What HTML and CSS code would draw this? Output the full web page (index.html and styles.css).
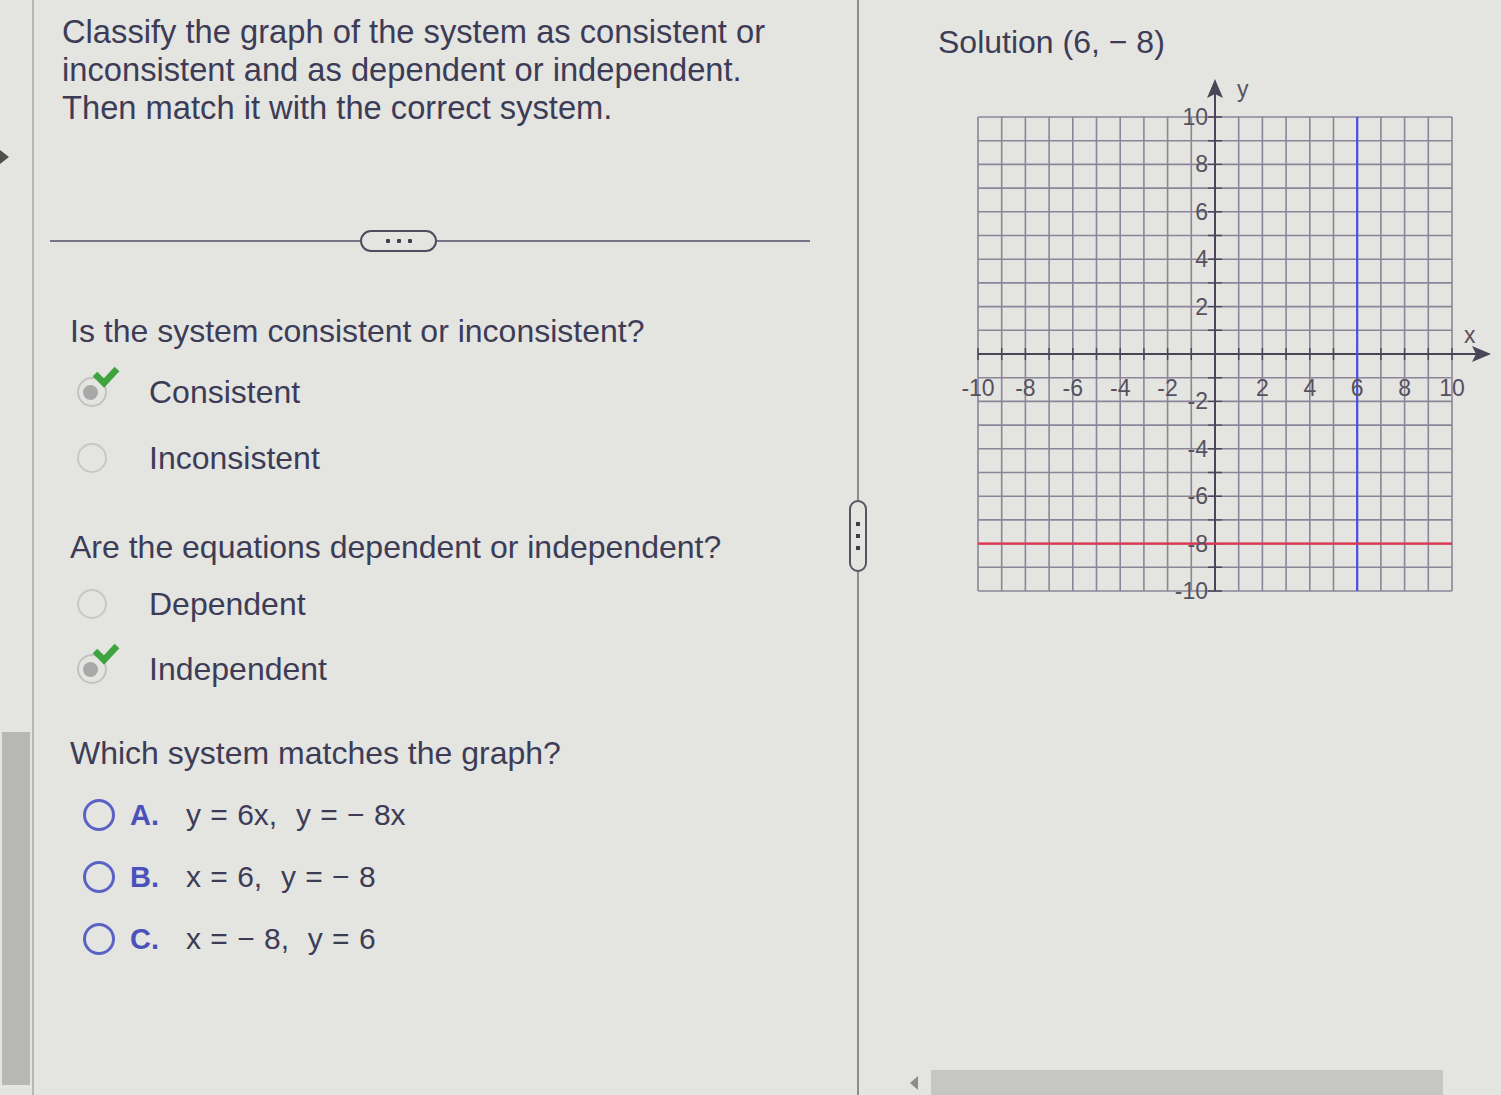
FILE: index.html
```html
<!DOCTYPE html>
<html>
<head>
<meta charset="utf-8">
<link rel="stylesheet" href="styles.css">
</head>
<body>
<div class="page">
  <aside class="rail">
    <span class="rail-arrow"></span>
    <div class="rail-thumb"></div>
  </aside>

  <main class="left">
    <h1 class="title">Classify the graph of the system as consistent or<br>inconsistent and as dependent or independent.<br>Then match it with the correct system.</h1>

    <div class="sep">
      <span class="sep-line sep-a"></span>
      <span class="pill"><i></i><i></i><i></i></span>
      <span class="sep-line"></span>
    </div>

    <p class="q q1">Is the system consistent or inconsistent?</p>
    <div class="opts opts1">
      <div class="opt">
        <span class="radio on">
          <svg class="check" viewBox="0 0 30 24"><path d="M4 9 L13 18 L26 4" fill="none" stroke="#3fa33f" stroke-width="6.5" stroke-linejoin="miter" stroke-linecap="butt"/></svg>
        </span>
        <span>Consistent</span>
      </div>
      <div class="opt"><span class="radio"></span><span>Inconsistent</span></div>
    </div>

    <p class="q q2">Are the equations dependent or independent?</p>
    <div class="opts opts2">
      <div class="opt"><span class="radio"></span><span>Dependent</span></div>
      <div class="opt">
        <span class="radio on">
          <svg class="check" viewBox="0 0 30 24"><path d="M4 9 L13 18 L26 4" fill="none" stroke="#3fa33f" stroke-width="6.5" stroke-linejoin="miter" stroke-linecap="butt"/></svg>
        </span>
        <span>Independent</span>
      </div>
    </div>

    <p class="q q3">Which system matches the graph?</p>
    <div class="choices">
      <div class="choice"><span class="bradio"></span><span class="letter">A.</span><span class="eq">y = 6x,  y = − 8x</span></div>
      <div class="choice"><span class="bradio"></span><span class="letter">B.</span><span class="eq">x = 6,  y = − 8</span></div>
      <div class="choice"><span class="bradio"></span><span class="letter">C.</span><span class="eq">x = − 8,  y = 6</span></div>
    </div>
  </main>

  <div class="divider">
    <span class="vline vline-top"></span>
    <span class="handle"><i></i><i></i><i></i></span>
    <span class="vline"></span>
  </div>

  <section class="right">
    <p class="sol">Solution (6, − 8)</p>
    <svg class="graph" viewBox="0 0 551 540" width="551" height="540">
      <path class="grid" d="M28 47v474m23.7-474v474m23.7-474v474m23.7-474v474m23.7-474v474m23.7-474v474m23.7-474v474m23.7-474v474m23.7-474v474m23.7-474v474m23.7-474v474m23.7-474v474m23.7-474v474m23.7-474v474m23.7-474v474m23.7-474v474m23.7-474v474m23.7-474v474m23.7-474v474m23.7-474v474m23.7-474v474"/>
      <path class="grid" d="M28 47h474m-474 23.7h474m-474 23.7h474m-474 23.7h474m-474 23.7h474m-474 23.7h474m-474 23.7h474m-474 23.7h474m-474 23.7h474m-474 23.7h474m-474 23.7h474m-474 23.7h474m-474 23.7h474m-474 23.7h474m-474 23.7h474m-474 23.7h474m-474 23.7h474m-474 23.7h474m-474 23.7h474m-474 23.7h474m-474 23.7h474"/>

      <path class="axis" d="M28 284H526M265 521V24"/>
      <polygon class="arrow" points="541,284 522,276 526,284 522,292"/>
      <polygon class="arrow" points="265,9 257,28 265,24 273,28"/>

      <path class="tick" d="M258 47h14m-14 23.7h14m-14 23.7h14m-14 23.7h14m-14 23.7h14m-14 23.7h14m-14 23.7h14m-14 23.7h14m-14 23.7h14m-14 23.7h14m-14 47.4h14m-14 23.7h14m-14 23.7h14m-14 23.7h14m-14 23.7h14m-14 23.7h14m-14 23.7h14m-14 23.7h14m-14 23.7h14m-14 23.7h14"/>
      <path class="tick" d="M28 278v12m23.7-12v12m23.7-12v12m23.7-12v12m23.7-12v12m23.7-12v12m23.7-12v12m23.7-12v12m23.7-12v12m23.7-12v12m47.4-12v12m23.7-12v12m23.7-12v12m23.7-12v12m23.7-12v12m23.7-12v12m23.7-12v12m23.7-12v12m23.7-12v12m23.7-12v12"/>

      <line class="blue" x1="407.2" y1="47" x2="407.2" y2="521"/>
      <line class="red" x1="28" y1="473.6" x2="502" y2="473.6"/>

      <g class="lbl" text-anchor="middle">
        <text x="28" y="326">-10</text>
        <text x="75.4" y="326">-8</text>
        <text x="122.8" y="326">-6</text>
        <text x="170.2" y="326">-4</text>
        <text x="217.6" y="326">-2</text>
        <text x="312.4" y="326">2</text>
        <text x="359.8" y="326">4</text>
        <text x="407.2" y="326">6</text>
        <text x="454.6" y="326">8</text>
        <text x="502" y="326">10</text>
      </g>
      <g class="lbl" text-anchor="end">
        <text x="258" y="55">10</text>
        <text x="258" y="102.4">8</text>
        <text x="258" y="149.8">6</text>
        <text x="258" y="197.2">4</text>
        <text x="258" y="244.6">2</text>
        <text x="258" y="339.4">-2</text>
        <text x="258" y="386.8">-4</text>
        <text x="258" y="434.2">-6</text>
        <text x="258" y="481.6">-8</text>
        <text x="258" y="529">-10</text>
      </g>
      <text class="lbl" x="287" y="27">y</text>
      <text class="lbl" x="514" y="273">x</text>
    </svg>

    <div class="hscroll">
      <span class="harrow"></span>
      <span class="hthumb"></span>
    </div>
  </section>
</div>
</body>
</html>
```

FILE: styles.css
```css
html, body {
  margin: 0;
  padding: 0;
}

body {
  background: #e4e4e1;
  font-family: "Liberation Sans", Arial, sans-serif;
  color: #3d3c56;
}

.page {
  display: flex;
  width: 1501px;
  height: 1095px;
  overflow: hidden;
}

/* left rail with scrollbar */
.rail {
  width: 32px;
  flex: none;
  border-right: 2px solid #b6b6b3;
  display: flex;
  flex-direction: column;
}

.rail-arrow {
  display: block;
  margin-top: 150px;
  width: 0;
  height: 0;
  border-top: 7px solid transparent;
  border-bottom: 7px solid transparent;
  border-left: 9px solid #505050;
}

.rail-thumb {
  margin: auto 2px 10px 2px;
  height: 353px;
  background: #b7b7b5;
}

/* left question column */
.left {
  width: 814px;
  flex: none;
  box-sizing: border-box;
  padding: 13px 0 0 28px;
}

.title {
  margin: 0;
  font-size: 32.7px;
  line-height: 38px;
  font-weight: normal;
  white-space: nowrap;
}

.sep {
  display: flex;
  align-items: center;
  width: 760px;
  margin: 103px 0 0 -12px;
}

.sep-line {
  flex: 1;
  height: 1.5px;
  background: #767585;
}

.sep-a {
  flex: 0 0 310px;
}

.pill {
  width: 77px;
  height: 22px;
  box-sizing: border-box;
  border: 2px solid #4e4d5e;
  border-radius: 11px;
  display: flex;
  align-items: center;
  justify-content: center;
  gap: 7px;
}

.pill i {
  width: 4px;
  height: 4px;
  border-radius: 1px;
  background: #3f3f50;
}

.q {
  margin: 0;
  padding-left: 8px;
  font-size: 32px;
  line-height: 38px;
  white-space: nowrap;
}

.q1 { margin-top: 60px; }
.q2 { margin-top: 50px; }
.q3 { margin-top: 45px; }

.opts {
  display: flex;
  flex-direction: column;
}

.opts1 { margin-top: 22px; gap: 26px; }
.opts2 { margin-top: 18px; gap: 25px; }

.opt {
  height: 40px;
  display: flex;
  align-items: center;
  font-size: 32px;
}

.radio {
  position: relative;
  flex: none;
  width: 30px;
  height: 30px;
  box-sizing: border-box;
  border: 2.5px solid #c7c7c7;
  border-radius: 50%;
  margin: 0 42px 0 15px;
}

.radio.on {
  border-color: #c2c2c2;
}

.radio.on::before {
  content: "";
  position: absolute;
  left: 4px;
  top: 6px;
  width: 15px;
  height: 15px;
  border-radius: 50%;
  background: #a8a8a8;
}

.check {
  position: absolute;
  left: 12px;
  top: -14px;
  width: 30px;
  height: 24px;
}

.choices {
  margin-top: 23px;
  display: flex;
  flex-direction: column;
  gap: 22px;
}

.choice {
  height: 40px;
  display: flex;
  align-items: center;
}

.bradio {
  flex: none;
  width: 32px;
  height: 32px;
  box-sizing: border-box;
  border: 3px solid #5b62c6;
  border-radius: 50%;
  margin: 0 15px 0 21px;
}

.letter {
  width: 56px;
  font-size: 29px;
  font-weight: bold;
  color: #4a51bd;
}

.eq {
  font-size: 30px;
  word-spacing: 1px;
  white-space: pre;
}

/* vertical splitter */
.divider {
  width: 20px;
  flex: none;
  display: flex;
  flex-direction: column;
  align-items: center;
}

.vline {
  flex: 1;
  width: 2px;
  background: #8d8d8f;
}

.vline-top {
  flex: 0 0 500px;
}

.handle {
  width: 18px;
  height: 72px;
  box-sizing: border-box;
  border: 2px solid #55545f;
  border-radius: 9px;
  display: flex;
  flex-direction: column;
  align-items: center;
  justify-content: center;
  gap: 8px;
}

.handle i {
  width: 4px;
  height: 4px;
  background: #3f3f4a;
}

/* right column */
.right {
  flex: 1;
  display: flex;
  flex-direction: column;
  padding-left: 70px;
  min-width: 0;
}

.sol {
  margin: 23px 0 0;
  font-size: 32px;
  line-height: 38px;
  white-space: nowrap;
}

.graph {
  display: block;
  margin: 9px 0 0 12px;
  width: 551px;
  height: 540px;
}

.grid {
  fill: none;
  stroke: #8c8599;
  stroke-width: 1.6;
}

.axis {
  fill: none;
  stroke: #4a4558;
  stroke-width: 2;
}

.tick {
  fill: none;
  stroke: #4a4558;
  stroke-width: 1.4;
}

.arrow {
  fill: #4a4558;
}

.blue {
  stroke: #4b4fe0;
  stroke-width: 2.2;
}

.red {
  stroke: #e2334f;
  stroke-width: 2.2;
}

.lbl {
  font-family: "Liberation Sans", Arial, sans-serif;
  font-size: 23px;
  fill: #55525f;
}

.hscroll {
  margin: auto 0 0 -38px;
  height: 25px;
  display: flex;
  align-items: center;
}

.harrow {
  width: 0;
  height: 0;
  margin: 0 13px 0 10px;
  border-top: 7px solid transparent;
  border-bottom: 7px solid transparent;
  border-right: 8px solid #8d8d8d;
}

.hthumb {
  align-self: stretch;
  width: 512px;
  background: #c6c6c3;
}
```
